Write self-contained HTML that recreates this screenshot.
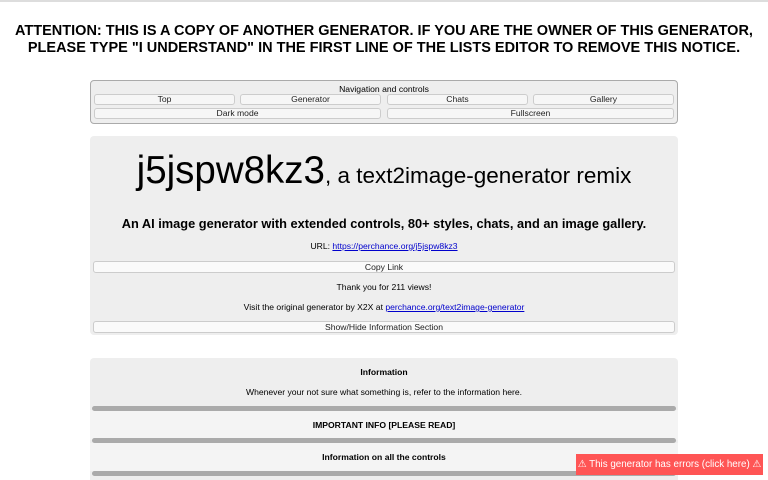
<!DOCTYPE html>
<html><head><style>
*{box-sizing:border-box;margin:0;padding:0}
html,body{width:768px;height:480px;overflow:hidden}
body{background:#fff;font-family:"Liberation Sans",Arial,sans-serif;color:#000;position:relative}
.top{position:absolute;top:0;left:0;width:768px;height:2px;background:#ddd}
.att{position:absolute;top:23px;left:0;width:768px;text-align:center;font-weight:bold;font-size:14.5px;line-height:17px}
.nav{position:absolute;left:90px;top:80px;width:588px;height:44px;background:#eee;border:1px solid #aaa;border-radius:4px;font-size:8.6px}
.nav .t{position:absolute;top:3px;left:0;width:100%;text-align:center}
.b{position:absolute;height:11px;background:#f6f6f6;border:1px solid #ccc;border-radius:3px;font-size:8.6px;line-height:9px;text-align:center;color:#222}
.main{position:absolute;left:90px;top:136px;width:588px;height:199px;background:#eee;border-radius:4px}
.c{position:absolute;left:0;width:100%;text-align:center}
a{color:#00c}
.info{position:absolute;left:90px;top:358px;width:588px;height:130px;background:#eee;border-radius:4px}
.bar{position:absolute;left:2px;width:584px;height:5px;background:#aaa;border-radius:3px}
.sec{position:absolute;left:0;width:588px;background:#f4f4f4}
.err{position:absolute;left:576px;top:454px;width:187px;height:21px;background:#f55;color:#fff;font-size:9.8px;line-height:21px;text-align:center;white-space:nowrap}
</style></head><body>
<div class="top"></div>
<div class="att">ATTENTION: THIS IS A COPY OF ANOTHER GENERATOR. IF YOU ARE THE OWNER OF THIS GENERATOR,<br>PLEASE TYPE "I UNDERSTAND" IN THE FIRST LINE OF THE LISTS EDITOR TO REMOVE THIS NOTICE.</div>
<div class="nav"><div class="t">Navigation and controls</div>
<div class="b" style="left:3px;top:13px;width:141px">Top</div>
<div class="b" style="left:149px;top:13px;width:141px">Generator</div>
<div class="b" style="left:296px;top:13px;width:141px">Chats</div>
<div class="b" style="left:442px;top:13px;width:141px">Gallery</div>
<div class="b" style="left:3px;top:27px;width:287px">Dark mode</div>
<div class="b" style="left:296px;top:27px;width:287px">Fullscreen</div>
</div>
<div class="main">
<div class="c" style="top:12px;font-size:38.5px;line-height:45px">j5jspw8kz3<span style="font-size:22.5px">, a text2image-generator remix</span></div>
<div class="c" style="top:80px;font-size:12.8px;font-weight:bold">An AI image generator with extended controls, 80+ styles, chats, and an image gallery.</div>
<div class="c" style="top:105px;font-size:8.6px">URL: <a href="#">https://perchance.org/j5jspw8kz3</a></div>
<div class="b" style="left:3px;top:125px;width:582px;height:12px;background:#fafafa;line-height:10px">Copy Link</div>
<div class="c" style="top:146px;font-size:8.6px">Thank you for 211 views!</div>
<div class="c" style="top:166px;font-size:8.6px">Visit the original generator by X2X at <a href="#">perchance.org/text2image-generator</a></div>
<div class="b" style="left:3px;top:185px;width:582px;height:12px;background:#fafafa;line-height:10px">Show/Hide Information Section</div>
</div>
<div class="info">
<div class="c" style="top:9px;font-size:8.6px;font-weight:bold">Information</div>
<div class="c" style="top:29px;font-size:8.6px">Whenever your not sure what something is, refer to the information here.</div>
<div class="sec" style="top:52px;height:30px"></div>
<div class="sec" style="top:85px;height:28px"></div>
<div class="bar" style="top:48px"></div>
<div class="c" style="top:62px;font-size:8.6px;font-weight:bold">IMPORTANT INFO [PLEASE READ]</div>
<div class="bar" style="top:80px"></div>
<div class="c" style="top:94px;font-size:8.6px;font-weight:bold">Information on all the controls</div>
<div class="bar" style="top:113px"></div>
</div>
<div class="err">⚠ This generator has errors (click here) ⚠</div>
</body></html>
